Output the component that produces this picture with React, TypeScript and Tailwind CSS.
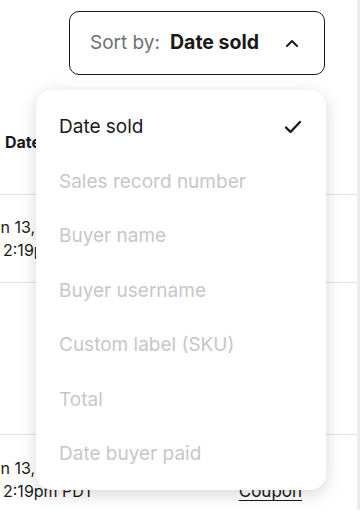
import { useState } from "react"

const options = [
  "Date sold",
  "Sales record number",
  "Buyer name",
  "Buyer username",
  "Custom label (SKU)",
  "Total",
  "Date buyer paid",
]

function CheckIcon() {
  return (
    <svg width="18" height="14" viewBox="0 0 18 14" fill="none">
      <path d="M2 7.5l4.5 4.5L16 2" stroke="#191919" strokeWidth="2.4" strokeLinecap="round" strokeLinejoin="round" />
    </svg>
  )
}

function ChevronUp() {
  return (
    <svg width="14" height="9" viewBox="0 0 14 9" fill="none">
      <path d="M2 7l5-5 5 5" stroke="#191919" strokeWidth="2" strokeLinecap="round" strokeLinejoin="round" />
    </svg>
  )
}

export default function App() {
  const [selected, setSelected] = useState("Date sold")

  return (
    <div
      className="relative w-[364px] h-[514px] overflow-hidden bg-white text-[#191919]"
      style={{ fontFamily: "Inter, 'Noto Sans', sans-serif" }}
    >
      <div className="w-[360px] h-[510px] border-r-[3px] border-[#ececec]">
        {/* sort control */}
        <div className="pt-[11px] pl-[69px]">
          <button className="flex items-center w-[256px] h-[64px] pl-[20px] pr-[25px] rounded-[10px] border border-[#191919] bg-white">
            <span className="text-[19px] text-[#707070]">Sort by:</span>
            <span className="ml-[10px] text-[19.5px] font-bold">{selected}</span>
            <span className="ml-auto flex items-center">
              <ChevronUp />
            </span>
          </button>
        </div>

        {/* table behind the menu */}
        <div className="mt-[15px] text-[16px]">
          <div className="h-[105px] flex items-center border-b border-[#e5e5e5]">
            <span className="pl-[5px] font-bold">Date sold</span>
          </div>
          <div className="h-[88px] flex flex-col justify-center border-b border-[#e5e5e5] leading-[23px]">
            <span className="-ml-[18px] whitespace-nowrap">Jun 13, 2023</span>
            <span className="pl-[3px] whitespace-nowrap">2:19pm PDT</span>
          </div>
          <div className="h-[152px] border-b border-[#e5e5e5]" />
          <div className="pt-[22px] leading-[23px]">
            <span className="block -ml-[18px] whitespace-nowrap">Jun 13, 2023</span>
            <div className="flex">
              <span className="pl-[3px] whitespace-nowrap">2:19pm PDT</span>
              <span className="ml-[145px] text-[17px] underline underline-offset-[3px]">Coupon</span>
            </div>
          </div>
        </div>
      </div>

      {/* dropdown menu */}
      <div className="absolute left-[36px] top-[90px] w-[290px] h-[400px] pt-[10px] rounded-[16px] bg-white shadow-[0_4px_18px_rgba(0,0,0,0.16)]">
        {options.map((opt) => {
          const active = opt === selected
          return (
            <div
              key={opt}
              onClick={() => setSelected(opt)}
              className="h-[54.5px] flex items-center pl-[23px] pr-[24px] cursor-pointer"
            >
              <span className={`text-[19px] ${active ? "text-[#191919]" : "text-[#c7c7c7]"}`}>{opt}</span>
              {active && (
                <span className="ml-auto flex items-center">
                  <CheckIcon />
                </span>
              )}
            </div>
          )
        })}
      </div>
    </div>
  )
}
